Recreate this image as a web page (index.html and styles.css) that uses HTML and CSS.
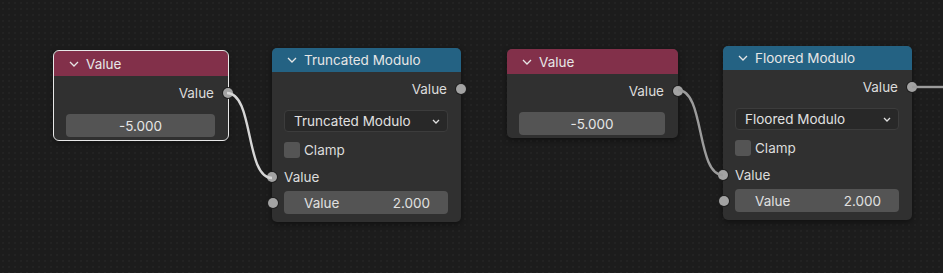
FILE: index.html
```html
<!DOCTYPE html>
<html lang="en">
<head>
<meta charset="UTF-8">
<title>Node Editor</title>
<link rel="stylesheet" href="styles.css">
</head>
<body>

<div class="canvas">

  <svg class="links" width="943" height="273">
    <path class="link selected" d="M227 93 C254 93 245 178 272 178"/>
    <path class="link" d="M678 90 C705 90 696 175 723 175"/>
    <path class="link" d="M912 87 L943 87"/>
  </svg>

  <div class="node value-node selected-node" style="left:54px; top:51px; width:174px;">
    <div class="node-header">
      <svg class="chev" width="10" height="6"><polyline points="1,1 5,5 9,1"/></svg>
      <span class="title">Value</span>
    </div>
    <div class="node-body">
      <div class="row out">Value<span class="socket right"></span></div>
      <div class="num-field">-5.000</div>
    </div>
  </div>

  <div class="node math-node" style="left:272px; top:48px; width:189px;">
    <div class="node-header">
      <svg class="chev" width="10" height="6"><polyline points="1,1 5,5 9,1"/></svg>
      <span class="title">Truncated Modulo</span>
    </div>
    <div class="node-body">
      <div class="row out">Value<span class="socket right"></span></div>
      <div class="dropdown">Truncated Modulo<svg class="dd-arrow" width="8" height="5"><polyline points="1,1 4,4 7,1"/></svg></div>
      <div class="row check"><span class="box"></span>Clamp</div>
      <div class="row in"><span class="socket left"></span>Value</div>
      <div class="slider"><span class="socket left"></span><span>Value</span><span>2.000</span></div>
    </div>
  </div>

  <div class="node value-node" style="left:507px; top:49px; width:171px;">
    <div class="node-header">
      <svg class="chev" width="10" height="6"><polyline points="1,1 5,5 9,1"/></svg>
      <span class="title">Value</span>
    </div>
    <div class="node-body">
      <div class="row out">Value<span class="socket right"></span></div>
      <div class="num-field">-5.000</div>
    </div>
  </div>

  <div class="node math-node" style="left:723px; top:46px; width:189px;">
    <div class="node-header">
      <svg class="chev" width="10" height="6"><polyline points="1,1 5,5 9,1"/></svg>
      <span class="title">Floored Modulo</span>
    </div>
    <div class="node-body">
      <div class="row out">Value<span class="socket right"></span></div>
      <div class="dropdown">Floored Modulo<svg class="dd-arrow" width="8" height="5"><polyline points="1,1 4,4 7,1"/></svg></div>
      <div class="row check"><span class="box"></span>Clamp</div>
      <div class="row in"><span class="socket left"></span>Value</div>
      <div class="slider"><span class="socket left"></span><span>Value</span><span>2.000</span></div>
    </div>
  </div>

</div>

</body>
</html>
```

FILE: styles.css
```css
body {
  margin: 0;
  padding: 0;
  background-color: #1d1d1d;
  font-family: Inter, "DejaVu Sans", sans-serif;
  font-size: 13.5px;
  color: #dcdcdc;
}
.canvas {
  position: relative;
  width: 943px;
  height: 273px;
  overflow: hidden;
  background-color: #1c1c1c;
  background-image: radial-gradient(circle, #222222 0.7px, transparent 1px);
  background-size: 6px 6px;
}
.links {
  position: absolute;
  left: 0;
  top: 0;
  z-index: 2;
  pointer-events: none;
}
.link {
  fill: none;
  stroke: #9c9c9c;
  stroke-width: 2.4;
}
.link.selected {
  stroke: #d6d6d6;
}
.node {
  position: absolute;
  box-sizing: border-box;
  background-color: #303030;
  border-radius: 5px;
  box-shadow: 0 2px 6px rgba(0, 0, 0, 0.45);
  z-index: 1;
}
.selected-node {
  outline: 1px solid #e8e8e8;
}
.node-header {
  height: 24px;
  display: flex;
  align-items: center;
  padding-left: 15px;
  border-radius: 5px 5px 0 0;
  color: #e6e6e6;
}
.value-node .node-header {
  background-color: #82304a;
  height: 25px;
}
.math-node .node-header {
  background-color: #246283;
}
.chev {
  margin-right: 7px;
  fill: none;
  stroke: #e6e6e6;
  stroke-width: 1.3;
}
.node-body {
  display: flex;
  flex-direction: column;
  padding: 6px 13px 8px 12px;
}
.value-node .node-body {
  padding-bottom: 3px;
}
.row {
  position: relative;
  height: 22px;
  display: flex;
  align-items: center;
}
.row.out {
  justify-content: flex-end;
  margin-right: 1px;
}
.row.check {
  margin-top: 7px;
  gap: 4px;
}
.row.in {
  margin-top: 5px;
}
.socket {
  position: absolute;
  top: 50%;
  width: 10px;
  height: 10px;
  margin-top: -5px;
  border-radius: 50%;
  background-color: #a3a3a3;
  box-shadow: 0 0 0 1px #1f1f1f;
  z-index: 3;
}
.row.out .socket.right {
  right: -19px;
}
.socket.left {
  left: -17px;
}
.num-field {
  height: 23px;
  margin-top: 10px;
  background-color: #545454;
  border-radius: 4px;
  display: flex;
  align-items: center;
  justify-content: center;
  color: #e6e6e6;
}
.dropdown {
  position: relative;
  height: 22px;
  margin-top: 10px;
  box-sizing: border-box;
  background-color: #282828;
  border: 1px solid #3c3c3c;
  border-radius: 4px;
  display: flex;
  align-items: center;
  padding-left: 9px;
  color: #e0e0e0;
}
.dd-arrow {
  position: absolute;
  right: 7px;
  top: 8px;
  fill: none;
  stroke: #e0e0e0;
  stroke-width: 1.3;
}
.box {
  width: 16px;
  height: 16px;
  background-color: #545454;
  border-radius: 3px;
}
.slider {
  position: relative;
  height: 23px;
  margin-top: 3px;
  background-color: #545454;
  border-radius: 4px;
  display: flex;
  align-items: center;
  justify-content: space-between;
  padding: 0 18px 0 20px;
  color: #e0e0e0;
}
.slider .socket.left {
  left: -16px;
}
```
